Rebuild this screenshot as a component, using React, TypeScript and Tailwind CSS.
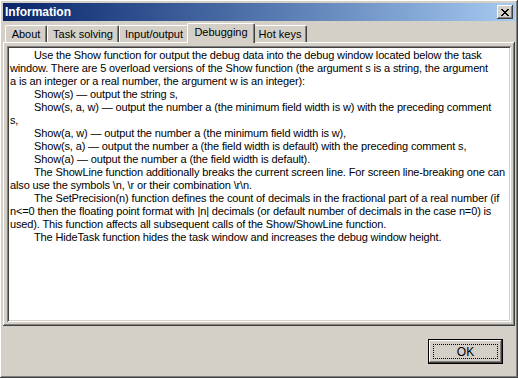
const raised =
  "shadow-[inset_-1px_-1px_#404040,inset_1px_1px_#ffffff,inset_-2px_-2px_#808080,inset_2px_2px_#d4d0c8]";

const tabs = [
  { label: "About", width: "w-[42px]" },
  { label: "Task solving", width: "w-[72px]" },
  { label: "Input/output", width: "w-[70px]" },
  { label: "Debugging", width: "w-[68px]", active: true },
  { label: "Hot keys", width: "w-[54px]" },
];

// [indented, text]
const lines: [boolean, string][] = [
  [true, "Use the Show function for output the debug data into the debug window located below the task"],
  [false, "window. There are 5 overload versions of the Show function (the argument s is a string, the argument"],
  [false, "a is an integer or a real number, the argument w is an integer):"],
  [true, "Show(s) — output the string s,"],
  [true, "Show(s, a, w) — output the number a (the minimum field width is w) with the preceding comment"],
  [false, "s,"],
  [true, "Show(a, w) — output the number a (the minimum field width is w),"],
  [true, "Show(s, a) — output the number a (the field width is default) with the preceding comment s,"],
  [true, "Show(a) — output the number a (the field width is default)."],
  [true, "The ShowLine function additionally breaks the current screen line. For screen line-breaking one can"],
  [false, "also use the symbols \\n, \\r or their combination \\r\\n."],
  [true, "The SetPrecision(n) function defines the count of decimals in the fractional part of a real number (if"],
  [false, "n<=0 then the floating point format with |n| decimals (or default number of decimals in the case n=0) is"],
  [false, "used). This function affects all subsequent calls of the Show/ShowLine function."],
  [true, "The HideTask function hides the task window and increases the debug window height."],
];

const Tab = ({ label, width, active }: { label: string; width: string; active?: boolean }) => (
  <div
    className={`${width} relative flex items-center justify-center rounded-t-[2px] border-l border-t border-r border-l-white border-t-white border-r-[#404040] shadow-[inset_-1px_0_#808080] ${
      active ? "z-10 -mx-[2px] h-[20px] -mb-[1px] bg-[#d4d0c8] pb-[2px]" : "h-[17px]"
    }`}
  >
    {label}
  </div>
);

/**
 * Information dialog, Debugging tab
 */
export default function App() {
  return (
    <div
      className={`flex h-[378px] w-[518px] flex-col bg-[#d4d0c8] p-[3px] text-[11px] text-black ${raised}`}
      style={{ fontFamily: '"Liberation Sans", Arial, sans-serif' }}
    >
      {/* title bar */}
      <div className="flex h-[18px] shrink-0 items-center bg-gradient-to-r from-[#0a246a] to-[#a6caf0] pl-[2px] pr-[2px]">
        <span className="flex-1 text-[12px] font-bold text-white">Information</span>
        <button
          type="button"
          className={`flex h-[14px] w-[16px] items-center justify-center bg-[#d4d0c8] ${raised}`}
        >
          <svg width="8" height="7" viewBox="0 0 8 7" shapeRendering="crispEdges">
            <path d="M0 0h2v1h-2zM6 0h2v1h-2zM1 1h2v1h-2zM5 1h2v1h-2zM2 2h4v1h-4zM3 3h2v1h-2zM2 4h4v1h-4zM1 5h2v1h-2zM5 5h2v1h-2zM0 6h2v1h-2zM6 6h2v1h-2z" fill="#000" />
          </svg>
        </button>
      </div>

      {/* tabs */}
      <div className="mt-[2px] flex h-[19px] shrink-0 items-end pl-[2px]">
        {tabs.map((t) => (
          <Tab key={t.label} {...t} />
        ))}
      </div>

      {/* tab page */}
      <div className={`flex h-[284px] shrink-0 flex-col p-[4px] ${raised}`}>
        <div className="flex-1 overflow-hidden bg-white shadow-[inset_1px_1px_#808080,inset_-1px_-1px_#ffffff,inset_2px_2px_#404040,inset_-2px_-2px_#d4d0c8] px-[3px] pt-[3px] tracking-[-0.14px]">
          {lines.map(([indent, text], i) => (
            <div
              key={i}
              className={`h-[13px] whitespace-pre leading-[13px] ${indent ? "pl-[24px]" : ""}`}
            >
              {text}
            </div>
          ))}
        </div>
      </div>

      {/* buttons */}
      <div className="flex flex-1 items-start justify-end pr-[12px] pt-[13px]">
        <button
          type="button"
          className="h-[25px] w-[75px] border border-black bg-[#d4d0c8] p-0 shadow-[inset_-1px_-1px_#404040,inset_1px_1px_#ffffff,inset_-2px_-2px_#808080]"
        >
          <div className="mx-[4px] flex h-[15px] items-center justify-center border border-dotted border-black text-[12px]">
            OK
          </div>
        </button>
      </div>
    </div>
  );
}
